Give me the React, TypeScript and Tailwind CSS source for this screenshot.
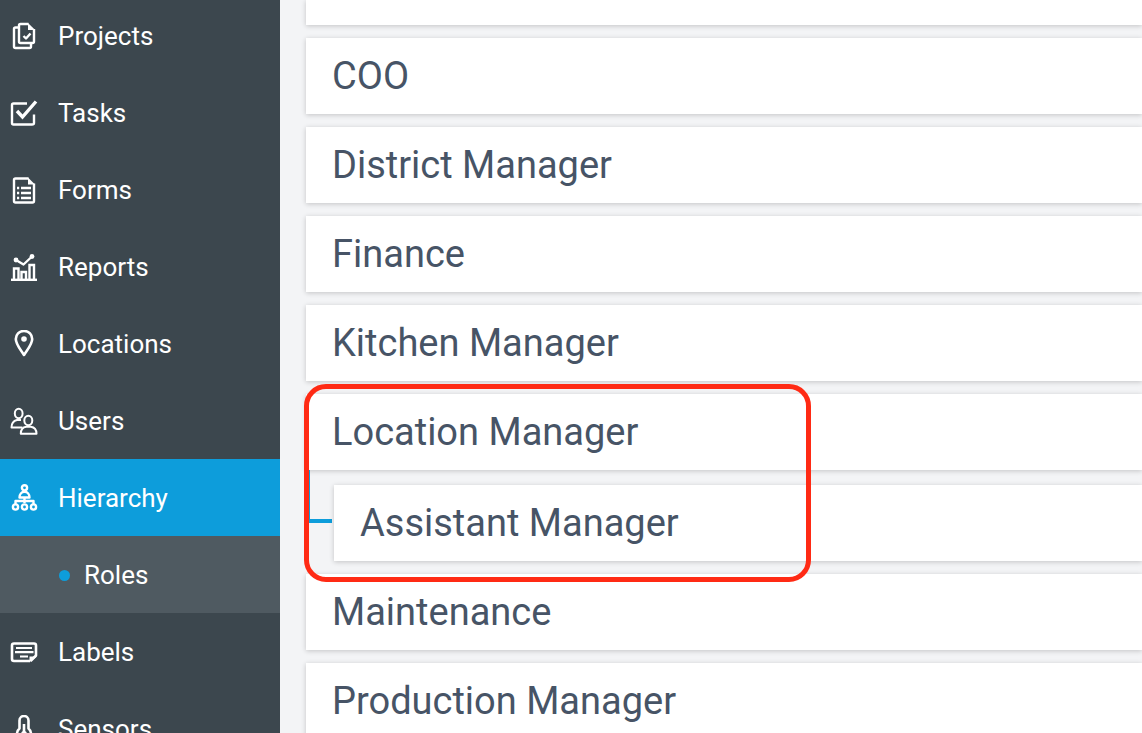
import React from "react";
import clsx from "clsx";

type NavItem = { label: string; icon: React.ReactNode; active?: boolean };
type Role = { name: string; children?: Role[] };

const Icon = ({ children }: { children: React.ReactNode }) => (
  <svg
    viewBox="0 0 28 28"
    className="h-7 w-7 shrink-0"
    fill="none"
    stroke="currentColor"
    strokeWidth={2.4}
    strokeLinejoin="round"
    aria-hidden="true"
  >
    {children}
  </svg>
);

const ProjectsIcon = (
  <Icon>
    <path d="M9 5.500H5.500Q4 5.500 4 7V24.500Q4 26 5.500 26H19.500Q21 26 21 24.500V21" />
    <path d="M18.500 2H10.500Q9 2 9 3.500V19.500Q9 21 10.500 21H22.500Q24 21 24 19.500V7" />
    <path d="M18 1V8H25.200Z" fill="currentColor" stroke="none" />
    <path d="M13.500 14l2.500 2.500 4.500-5" />
  </Icon>
);

const TasksIcon = (
  <Icon>
    <path d="M17 4.500H3.500Q2 4.500 2 6V24Q2 25.500 3.500 25.500H22Q24 25.500 24 24V15.500" />
    <path d="M7 12l5.500 6L26 2.500" strokeWidth={3.4} strokeLinejoin="miter" />
  </Icon>
);

const FormsIcon = (
  <Icon>
    <path d="M18.500 2.500H5.500Q4 2.500 4 4V25Q4 26.500 5.500 26.500H22.500Q24 26.500 24 25V7.500" />
    <path d="M18 1.500V8.500h7Z" fill="currentColor" stroke="none" />
    <path d="M7 12h2.200M11 12h10M7 17h2.200M11 17h10M7 22h2.200M11 22h10" />
  </Icon>
);

const ReportsIcon = (
  <Icon>
    <path d="M1 26.800h26" />
    <path
      d="M4 26.500V15.500h4.500V26.500M11.500 26.500v-7.500H16v7.500M19.500 26.500V12h4.500v14.500"
      strokeLinejoin="miter"
    />
    <path d="M6 7l7.500 4.500L22 3.500" />
    <circle cx="6" cy="7" r="2.400" fill="currentColor" stroke="none" />
    <circle cx="22" cy="3.500" r="2.400" fill="currentColor" stroke="none" />
  </Icon>
);

const LocationsIcon = (
  <Icon>
    <path
      d="M14 1C9 1 5.800 4.500 5.800 9c0 5.500 5.200 11 8.200 16 3-5 8.200-10.500 8.200-16C22.200 4.500 19 1 14 1Z"
      strokeWidth={2.6}
    />
    <circle cx="14" cy="9" r="2.800" fill="currentColor" stroke="none" />
  </Icon>
);

const UsersIcon = (
  <Icon>
    <ellipse cx="8.700" cy="6.500" rx="3.900" ry="4.700" strokeWidth={2} />
    <path d="M12.500 20.500H1.500C1.500 16.500 3 14 7 13h4" strokeWidth={2} />
    <ellipse cx="18.300" cy="13.500" rx="4" ry="4.700" strokeWidth={2} />
    <path
      d="M10.800 26.800c0-4 2-6.500 5.500-7h4.500c3.500.5 5.700 3 5.700 7Z"
      strokeWidth={2}
    />
  </Icon>
);

const HierarchyIcon = (
  <Icon>
    <circle cx="14.500" cy="3.800" r="2.600" />
    <path d="M9.500 13.500c0-3.200 2-5.700 5-5.700s5 2.500 5 5.700Z" />
    <path d="M14.500 13v6M5.500 20V17h18v3" />
    <circle cx="5.500" cy="23" r="2.600" />
    <circle cx="14.500" cy="23" r="2.600" />
    <circle cx="23.500" cy="23" r="2.600" />
  </Icon>
);

const LabelsIcon = (
  <Icon>
    <path
      d="M20 23H4Q2 23 2 21V7.500Q2 5.500 4 5.500H24Q26 5.500 26 7.500V17.500L20.500 23"
      strokeWidth={2.6}
    />
    <path d="M19.500 24.300V18.500H27Z" fill="currentColor" stroke="none" />
    <path d="M6 10h16M5 14.200h18.500M10 18.500h8" strokeWidth={2.2} />
  </Icon>
);

const SensorsIcon = (
  <Icon>
    <path
      d="M9.500 13.500V5.500a4.500 4.500 0 0 1 9 0v8a7 7 0 1 1-9 0Z"
      strokeWidth={2.6}
    />
    <path d="M14 9v10" strokeWidth={2.6} />
    <circle cx="14" cy="19" r="3" fill="currentColor" stroke="none" />
  </Icon>
);

const navItems: NavItem[] = [
  { label: "Projects", icon: ProjectsIcon },
  { label: "Tasks", icon: TasksIcon },
  { label: "Forms", icon: FormsIcon },
  { label: "Reports", icon: ReportsIcon },
  { label: "Locations", icon: LocationsIcon },
  { label: "Users", icon: UsersIcon },
  { label: "Hierarchy", icon: HierarchyIcon, active: true },
  { label: "Labels", icon: LabelsIcon },
  { label: "Sensors", icon: SensorsIcon },
];

const roles: Role[] = [
  { name: "COO" },
  { name: "District Manager" },
  { name: "Finance" },
  { name: "Kitchen Manager" },
  { name: "Location Manager", children: [{ name: "Assistant Manager" }] },
  { name: "Maintenance" },
  { name: "Production Manager" },
];

const Sidebar = () => (
  <nav className="-mt-[3px] w-[280px] shrink-0 bg-[#3c474e] text-[26px] text-white">
    <ul>
      {navItems.map((item) => (
        <li key={item.label}>
          <a
            href="#"
            className={clsx(
              "flex h-[77px] items-center gap-5 pt-px pl-2.5",
              item.active && "bg-[#0d9ddb]"
            )}
          >
            {item.icon}
            {item.label}
          </a>
          {/* Submenu of the open section */}
          {item.active && (
            <a
              href="#"
              className="flex h-[77px] items-center gap-3.5 bg-[#4f5a61] pt-px pl-[59px]"
            >
              <span className="h-[11px] w-[11px] rounded-full bg-[#0d9ddb]" />
              Roles
            </a>
          )}
        </li>
      ))}
    </ul>
  </nav>
);

const RoleCard = ({ name }: { name: string }) => (
  <div className="flex h-[76px] items-center bg-white pl-[26px] whitespace-nowrap shadow-[0_1px_5px_rgba(0,0,0,0.2)]">
    {name}
  </div>
);

const RoleItem = ({ role }: { role: Role }) => (
  <li className="relative">
    <RoleCard name={role.name} />
    {role.children && (
      <>
        <ul className="relative pt-[15px] pl-7">
          {/* Connector from the parent to its child */}
          <span className="absolute top-0 left-0 h-[53px] w-[26px] border-b-4 border-l-4 border-[#0d9ddb]" />
          {role.children.map((child) => (
            <RoleItem key={child.name} role={child} />
          ))}
        </ul>
        <div className="pointer-events-none absolute -top-2.5 -bottom-[21px] -left-0.5 z-10 w-[507px] rounded-[22px] border-5 border-[#ff2a14]" />
      </>
    )}
  </li>
);

const App = () => {
  return (
    <div className="flex h-screen overflow-hidden bg-[#f3f4f6] font-[Roboto,sans-serif]">
      <Sidebar />
      <main className="min-w-0 flex-1 pl-[26px] text-[38px] text-[#475466]">
        <ul className="flex flex-col gap-[13px]">
          {/* Tail of the row above */}
          <li className="h-[25px] bg-white shadow-[0_1px_5px_rgba(0,0,0,0.2)]" />
          {roles.map((role) => (
            <RoleItem key={role.name} role={role} />
          ))}
        </ul>
      </main>
    </div>
  );
};

export default App;
